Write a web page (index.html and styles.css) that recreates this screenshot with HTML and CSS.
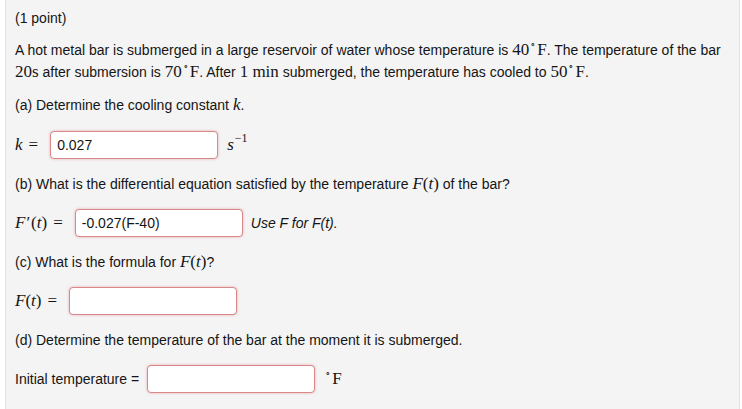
FILE: index.html
```html
<!DOCTYPE html>
<html>
<head>
<meta charset="utf-8">
<link rel="stylesheet" href="styles.css">
</head>
<body>
<div class="problem">
  <p class="pts">(1 point)</p>
  <p class="intro">A hot metal bar is submerged in a large reservoir of water whose temperature is <span class="m">40<sup class="deg">∘</sup>F</span>. The temperature of the bar <span class="m">20s</span> after submersion is <span class="m">70<sup class="deg">∘</sup>F</span>. After <span class="m">1 min</span> submerged, the temperature has cooled to <span class="m">50<sup class="deg">∘</sup>F</span>.</p>
  <p class="q">(a) Determine the cooling constant <span class="m"><i>k</i></span>.</p>
  <div class="row first"><span class="m lbl"><i>k</i><span class="eq">=</span></span><input class="ans" value="0.027"><span class="m unit"><i>s</i><sup class="sup">−1</sup></span></div>
  <p class="q">(b) What is the differential equation satisfied by the temperature <span class="m"><i>F</i>(<i>t</i>)</span> of the bar?</p>
  <div class="row"><span class="m lbl"><i>F</i><span class="prime">′</span>(<i>t</i>)<span class="eq">=</span></span><input class="ans" value="-0.027(F-40)"><span class="hint">Use F for F(t).</span></div>
  <p class="q">(c) What is the formula for <span class="m"><i>F</i>(<i>t</i>)</span>?</p>
  <div class="row"><span class="m lbl"><i>F</i>(<i>t</i>)<span class="eq">=</span></span><input class="ans" value=""></div>
  <p class="q">(d) Determine the temperature of the bar at the moment it is submerged.</p>
  <div class="row"><span>Initial temperature =</span><input class="ans" value=""><span class="m unit"><sup class="deg">∘</sup>F</span></div>
</div>
</body>
</html>
```
FILE: styles.css
```css
html, body { margin: 0; padding: 0; background: #fff; }
body { font-family: "Liberation Sans", Arial, sans-serif; font-size: 14px; color: #151515; }
.problem {
  margin-left: 5px;
  width: 735px;
  height: 409px;
  box-sizing: border-box;
  background: #f4f4f4;
  border-left: 1px solid #e2e2e2;
  border-right: 1px solid #e2e2e2;
  padding: 9px 0 0 9px;
}
p { margin: 0; }
.pts { line-height: 18px; margin-bottom: 12px; }
.intro { line-height: 22px; margin-bottom: 13px; }
.q { line-height: 18px; }
.m { font-family: "Liberation Serif", "Times New Roman", serif; font-size: 17px; }
.deg { font-size: 9px; vertical-align: 7px; line-height: 0; margin: 0 1px; }
.sup { font-size: 12px; vertical-align: 8px; line-height: 0; margin-left: 1px; }
.prime { margin: 0 1px 0 1px; }
.eq { margin: 0 4px 0 6px; }
.row { display: flex; align-items: center; gap: 8px; margin: 16px 0 16px; height: 28px; }
.row.first { margin-top: 17px; }
.lbl { white-space: nowrap; }
.ans {
  width: 168px; height: 28px; box-sizing: border-box;
  border: 1px solid #d8878a; border-radius: 4px;
  box-shadow: 0 0 3px rgba(217, 83, 79, 0.4);
  background: #fff;
  font-family: "Liberation Sans", Arial, sans-serif; font-size: 14px; color: #151515;
  padding: 0 6px;
  margin: 0;
}
.unit { margin-left: 1px; }
.hint { font-style: italic; }
```
